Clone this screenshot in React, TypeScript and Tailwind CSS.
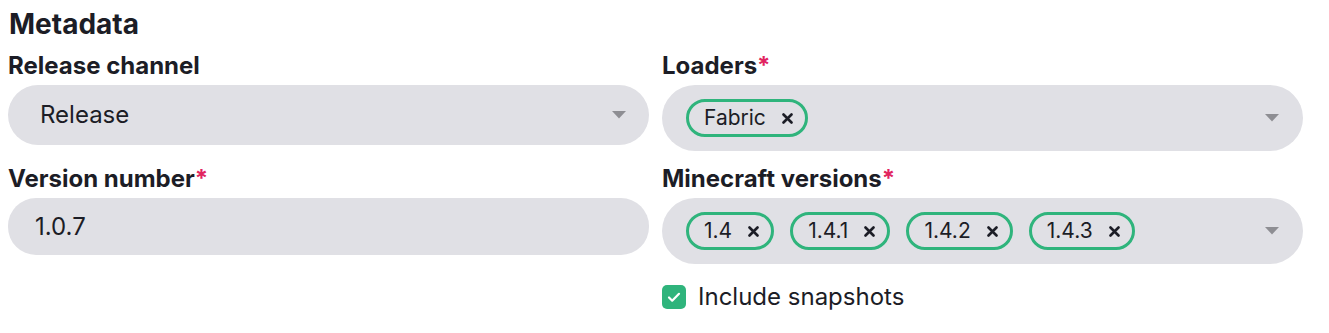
import React from "react";

const Caret = () => (
	<svg width="14" height="8" viewBox="0 0 14 8" className="shrink-0">
		<path d="M0 0h14L7 7.5z" fill="#8e8e93" />
	</svg>
);

const Remove = () => (
	<svg width="11" height="11" viewBox="0 0 11 11" className="shrink-0">
		<path d="M1.5 1.5l8 8M9.5 1.5l-8 8" stroke="#1c1d26" strokeWidth="2.6" strokeLinecap="round" />
	</svg>
);

const Chip = ({ label }: { label: string }) => (
	<div className="flex h-[38px] items-center gap-[16px] rounded-full border-[3px] border-[#2fb47c] pl-[15px] pr-[12px] text-[21px] text-[#1c1d26]">
		<span>{label}</span>
		<Remove />
	</div>
);

const Label = ({ text, required }: { text: string; required?: boolean }) => (
	<div className="mb-[4px] text-[24px] leading-[30px] font-bold text-[#1c1d26]">
		{text}
		{required && <span className="text-[#e1245f]">*</span>}
	</div>
);

export default function App() {
	return (
		<div
			className="h-[333px] w-[1329px] bg-white pl-[8px] pt-[7px]"
			style={{ fontFamily: "Inter, 'Noto Sans', sans-serif" }}
		>
			<h2 className="pl-[1px] text-[28px] leading-[34px] font-bold text-[#1c1d26]">Metadata</h2>

			<div className="mt-[10px] grid w-[1295px] grid-cols-2 gap-x-[13px] gap-y-[13px]">
				<div className="flex flex-col">
					<Label text="Release channel" />
					<div className="flex h-[60px] items-center justify-between rounded-[30px] bg-[#e0e0e5] pl-[32px] pr-[23px] text-[24px] text-[#1c1d26]">
						<span>Release</span>
						<Caret />
					</div>
				</div>

				<div className="flex flex-col">
					<Label text="Loaders" required />
					<div className="flex h-[66px] items-center justify-between rounded-[33px] bg-[#e0e0e5] pl-[24px] pr-[24px]">
						<div className="flex gap-[16px]">
							<Chip label="Fabric" />
						</div>
						<Caret />
					</div>
				</div>

				<div className="flex flex-col">
					<Label text="Version number" required />
					<div className="flex h-[57px] items-center rounded-[28px] bg-[#e0e0e5] pl-[27px] text-[24px] text-[#1c1d26]">
						1.0.7
					</div>
				</div>

				<div className="flex flex-col">
					<Label text="Minecraft versions" required />
					<div className="flex h-[66px] items-center justify-between rounded-[33px] bg-[#e0e0e5] pl-[24px] pr-[24px]">
						<div className="flex gap-[16px]">
							<Chip label="1.4" />
							<Chip label="1.4.1" />
							<Chip label="1.4.2" />
							<Chip label="1.4.3" />
						</div>
						<Caret />
					</div>
					<label className="mt-[19px] flex items-center gap-[12px] text-[24px] leading-[28px] text-[#1c1d26]">
						<span className="flex h-[24px] w-[24px] items-center justify-center rounded-[5px] bg-[#2fb47c]">
							<svg width="16" height="16" viewBox="0 0 16 16">
								<path d="M3 8.5l3.2 3.2L13 4.8" fill="none" stroke="white" strokeWidth="2.2" strokeLinecap="round" strokeLinejoin="round" />
							</svg>
						</span>
						Include snapshots
					</label>
				</div>
			</div>
		</div>
	);
}
